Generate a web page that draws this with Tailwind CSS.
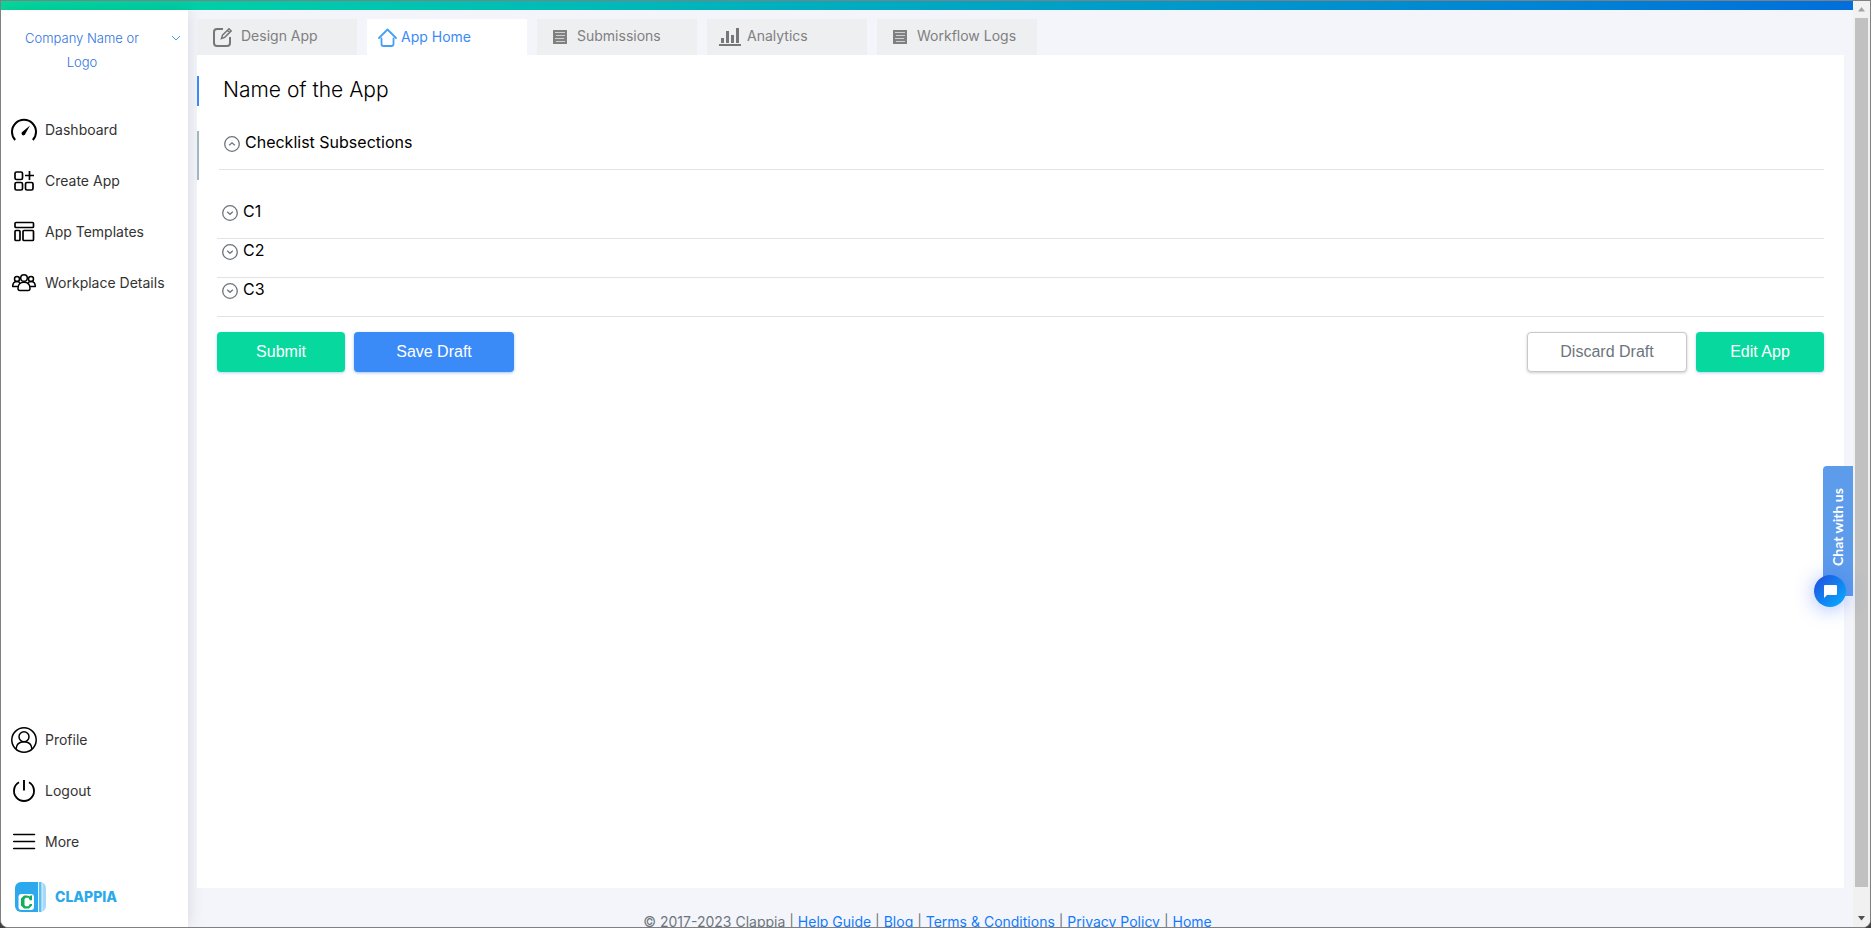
<!DOCTYPE html>
<html lang="en">
<head>
<meta charset="utf-8">
<meta name="viewport" content="width=device-width, initial-scale=1">
<title>Clappia - App Home</title>
<script src="https://cdn.jsdelivr.net/npm/@tailwindcss/browser@4"></script>
</head>
<body class="h-screen overflow-hidden bg-[#404040] font-['Inter',sans-serif]">
<div class="relative flex h-full overflow-hidden rounded-b-lg border border-[#808080] bg-[#f4f5fa]">
  <div class="flex min-w-0 flex-1 flex-col">
    <div class="h-[9px] shrink-0 bg-linear-to-r from-[#07d99e] to-[#026fdc]"></div>
    <div class="flex min-h-0 flex-1">

      <aside class="flex w-[187px] shrink-0 flex-col bg-white pt-4 shadow-[0_0_16px_rgba(0,0,0,0.12)]">
        <button class="mb-[30px] flex items-start text-[13px] leading-6 font-light text-[#2e73e0]">
          <span class="ml-5 w-[122px] text-center">Company Name or Logo</span>
          <svg class="mt-[9px] ml-[28px] h-[7px] w-[10px]" viewBox="0 0 10 7" fill="none" stroke="#4aa3f0" stroke-width="1"><path d="M1 1l4 4 4-4"/></svg>
        </button>
        <nav class="flex flex-1 flex-col text-sm text-[#333]">
          <a href="#" class="flex h-[51px] items-center gap-2 pl-[10px]">
            <svg class="size-[26px]" viewBox="0 0 26 26" fill="none" stroke="#000" stroke-width="2"><path d="M4.200 23A12 12 0 1 1 21.800 23"/><path d="M19 8.500L14.500 16.500A2 2 0 1 1 11.800 14.500z" fill="#000" stroke="none"/></svg>
            Dashboard</a>
          <a href="#" class="flex h-[51px] items-center gap-2 pl-[10px]">
            <svg class="size-[26px]" viewBox="0 0 26 26" fill="none" stroke="#000" stroke-width="1.700"><rect x="4" y="4" width="7.500" height="7.500" rx="1.500"/><rect x="4" y="14.500" width="7.500" height="7.500" rx="1.500"/><rect x="14.500" y="14.500" width="7.500" height="7.500" rx="1.500"/><path d="M18.500 3v9M14 7.500h9"/></svg>
            Create App</a>
          <a href="#" class="flex h-[51px] items-center gap-2 pl-[10px]">
            <svg class="size-[26px]" viewBox="0 0 26 26" fill="none" stroke="#000" stroke-width="1.700"><rect x="4" y="3.500" width="18.500" height="5" rx="1"/><rect x="4" y="11.500" width="5" height="10" rx="1"/><rect x="12" y="11.500" width="10.500" height="10" rx="1"/></svg>
            App Templates</a>
          <a href="#" class="flex h-[51px] items-center gap-2 pl-[10px]">
            <svg class="size-[26px]" viewBox="0 0 26 26" fill="none" stroke="#000" stroke-width="1.500" stroke-linejoin="round"><circle cx="13" cy="8" r="3.300"/><circle cx="6" cy="9" r="2.500"/><circle cx="20" cy="9" r="2.500"/><path d="M7 18.500c0-4 2.200-6.300 6-6.300s6 2.300 6 6.300c0 1.300-.8 2-2 2H9c-1.200 0-2-.7-2-2z"/><path d="M7.200 16.500H1.700c0-2.800 1-5 4.300-5 1.300 0 2.300.5 3 1.500M18.800 16.500h5.500c0-2.800-1-5-4.300-5-1.300 0-2.300.5-3 1.500"/></svg>
            Workplace Details</a>
          <a href="#" class="mt-auto flex h-[51px] items-center gap-2 pl-[10px]">
            <svg class="size-[26px]" viewBox="0 0 26 26" fill="none" stroke="#000" stroke-width="1.500"><circle cx="13" cy="13" r="12.200"/><circle cx="13" cy="9.800" r="5"/><path d="M5 22c.4-4.500 3.300-7.200 8-7.200s7.600 2.700 8 7.200"/></svg>
            Profile</a>
          <a href="#" class="flex h-[51px] items-center gap-2 pl-[10px]">
            <svg class="size-[26px]" viewBox="0 0 26 26" fill="none" stroke="#000" stroke-width="1.900"><path d="M13 2v10.500M8 4.300a10 10 0 1 0 10 0"/></svg>
            Logout</a>
          <a href="#" class="flex h-[51px] items-center gap-2 pl-[10px]">
            <svg class="size-[26px]" viewBox="0 0 26 26" fill="none" stroke="#000" stroke-width="1.500" stroke-linecap="round"><path d="M2.700 5.500h20.800M2.700 12.500h20.800M2.700 19.500h20.800"/></svg>
            More</a>
          <a href="#" class="flex h-[60px] items-center gap-[9px] pl-[14px] text-sm font-extrabold text-[#2ba9ec]">
            <svg class="h-[30px] w-[31px]" viewBox="0 0 31 30"><rect x="4" width="27" height="30" rx="6" fill="#a5d9f8"/><path d="M6 0h21v30H6z" fill="#5fbef2"/><path d="M23.500 0v30M27 0v30" stroke="#e5f5fe"/><path d="M6 0h17v30H6a6 6 0 0 1-6-6V6a6 6 0 0 1 6-6z" fill="#2ba9ec"/><rect x="3.500" y="12" width="15.500" height="16" rx="3" fill="#fff"/><path d="M17 18.300v-4.800h-1.800l-.5.900c-.8-.6-1.900-.9-3.200-.9H9l-3 3v7l3 3h5l3-3v-1.500h-2.200l-1.300 2.300h-2.800l-1.200-1.300v-6l1.200-1.300h2.800l1.300 2.600z" fill="#12ad5e"/></svg>
            CLAPPIA</a>
        </nav>
      </aside>

      <main class="flex min-w-0 flex-1 flex-col pt-[9px] pr-[9px] pl-[9px]">
        <nav class="flex shrink-0 gap-[10px] text-sm text-[#808080]">
          <a href="#" class="flex h-9 w-40 items-center gap-2 bg-[#eeeff1] pl-4">
            <svg class="size-5" viewBox="0 0 20 20" fill="none" stroke="#777" stroke-width="2"><path d="M10 2H4a3 3 0 0 0-3 3v11a3 3 0 0 0 3 3h10a3 3 0 0 0 3-3v-6" /><path d="M8.500 11.500l1-3.300 6.500-6.500 2.200 2.200-6.500 6.500zM14.500 3.500l2 2" stroke-width="1.500"/></svg>
            <span class="pb-[2px]">Design App</span></a>
          <a href="#" class="flex h-9 w-40 items-center gap-1 bg-white pl-[11px] text-[#3a8bf7]">
            <svg class="size-[19px]" viewBox="0 0 19 19" fill="none" stroke="#45a0f8" stroke-width="1.800" stroke-linejoin="round" stroke-linecap="round"><path d="M1 10l8.500-8.500L18 10M3.500 10.500V16a2 2 0 0 0 2 2h8a2 2 0 0 0 2-2v-5.500"/></svg>
            <span>App Home</span></a>
          <a href="#" class="flex h-9 w-40 items-center gap-[10px] bg-[#eeeff1] pl-4">
            <svg class="size-[14px]" viewBox="0 0 14 14"><path fill="#808080" d="M0 0h14v14H0z"/><path stroke="#d0d0d0" d="M2 2.500h10M3 5.500h9M2 8.500h9M3 11.500h9"/></svg>
            <span class="pb-[2px]">Submissions</span></a>
          <a href="#" class="flex h-9 w-40 items-center gap-[6px] bg-[#eeeff1] pl-3">
            <svg class="h-[18px] w-[22px]" viewBox="0 0 22 18" fill="#777"><path d="M2 10h3v5H2zM7 3h3v12H7zM12 7h3v8h-3zM17 0h3v15h-3zM0 16h22v2H0z"/></svg>
            <span class="pb-[2px]">Analytics</span></a>
          <a href="#" class="flex h-9 w-40 items-center gap-[10px] bg-[#eeeff1] pl-4">
            <svg class="size-[14px]" viewBox="0 0 14 14"><path fill="#808080" d="M0 0h14v14H0z"/><path stroke="#d0d0d0" d="M2 2.500h10M3 5.500h9M2 8.500h9M3 11.500h9"/></svg>
            <span class="pb-[2px]">Workflow Logs</span></a>
        </nav>

        <section class="min-h-0 flex-1 bg-white pt-[21px] text-black">
          <h1 class="h-[30px] border-l-2 border-[#3a8bf7] pl-6 text-[21px] leading-[28px] font-light">Name of the App</h1>
          <div class="mt-[25px] h-[49px] border-l-2 border-[#a3b5bd] pr-5 pl-5">
            <button class="flex h-[39px] w-full items-start gap-[5px] border-b border-[#e2e3e4] pl-[5px] text-base leading-[22px]">
              <svg class="mt-[5px] size-4" viewBox="0 0 16 16" fill="none" stroke="#6c757d" stroke-width="1.300"><circle cx="8" cy="8" r="7.300"/><path d="M5.200 9.300L8 6.800l2.800 2.500"/></svg>
              Checklist Subsections</button>
          </div>
          <div class="mt-5 px-5">
            <button class="flex h-[39px] w-full items-start gap-[5px] border-b border-[#e2e3e4] pl-[5px] text-base leading-[22px]">
              <svg class="mt-[5px] size-4" viewBox="0 0 16 16" fill="none" stroke="#6c757d" stroke-width="1.300"><circle cx="8" cy="8" r="7.300"/><path d="M5.200 6.800L8 9.300l2.800-2.500"/></svg>
              C1</button>
            <button class="flex h-[39px] w-full items-start gap-[5px] border-b border-[#e2e3e4] pl-[5px] text-base leading-[22px]">
              <svg class="mt-[5px] size-4" viewBox="0 0 16 16" fill="none" stroke="#6c757d" stroke-width="1.300"><circle cx="8" cy="8" r="7.300"/><path d="M5.200 6.800L8 9.300l2.800-2.500"/></svg>
              C2</button>
            <button class="flex h-[39px] w-full items-start gap-[5px] border-b border-[#e2e3e4] pl-[5px] text-base leading-[22px]">
              <svg class="mt-[5px] size-4" viewBox="0 0 16 16" fill="none" stroke="#6c757d" stroke-width="1.300"><circle cx="8" cy="8" r="7.300"/><path d="M5.200 6.800L8 9.300l2.800-2.500"/></svg>
              C3</button>
            <div class="mt-[15px] flex gap-[9px] font-['Liberation_Sans',sans-serif] text-base text-white">
              <button class="h-10 w-32 rounded bg-[#07d99e] shadow-[0_1px_3px_rgba(58,139,247,0.4)]">Submit</button>
              <button class="h-10 w-40 rounded bg-[#3a8bf7] shadow-[0_1px_3px_rgba(58,139,247,0.5)]">Save Draft</button>
              <button class="ml-auto h-10 w-40 rounded border border-[#c8c8c8] bg-white text-[#6c757d] shadow-[0_1px_3px_rgba(0,0,0,0.2)]">Discard Draft</button>
              <button class="h-10 w-32 rounded bg-[#07d99e] shadow-[0_1px_3px_rgba(58,139,247,0.4)]">Edit App</button>
            </div>
          </div>
        </section>

        <footer class="h-[39px] shrink-0 overflow-hidden pt-[22px] pr-[186px] text-center text-sm leading-6 whitespace-nowrap text-[#6c757d]">
          © 2017-2023 Clappia | <a href="#" class="text-[#107bff]">Help Guide</a> | <a href="#" class="text-[#107bff]">Blog</a> | <a href="#" class="text-[#107bff]">Terms &amp; Conditions</a> | <a href="#" class="text-[#107bff]">Privacy Policy</a> | <a href="#" class="text-[#107bff]">Home</a>
        </footer>
      </main>
    </div>
  </div>

  <div class="flex w-[17px] shrink-0 flex-col items-center bg-[#f1f1f1]">
    <svg class="mt-[6px] mb-[6px] h-[5px] w-[7px] shrink-0" viewBox="0 0 7 5" fill="#a3a3a3"><path d="M0 4.500L3.500 0 7 4.500z"/></svg>
    <div class="w-[13px] flex-1 bg-[#c1c1c1]"></div>
    <svg class="mt-[29px] mb-[6px] h-[5px] w-[7px] shrink-0" viewBox="0 0 7 5" fill="#505050"><path d="M0 0h7L3.500 4.500z"/></svg>
  </div>

  <!-- Chat launcher floating over the page edge -->
  <button class="absolute top-[465px] right-[17px] flex h-[130px] w-[30px] rotate-180 items-center justify-center rounded-r bg-[#5d9beb] pt-2 font-['Lato',sans-serif] text-sm font-bold text-white [writing-mode:vertical-rl]">Chat with us</button>
  <button aria-label="Open chat" class="absolute top-[574px] right-[24px] flex size-8 items-center justify-center rounded-full bg-linear-to-br from-[#2348dd] to-[#05b0ff] shadow-[0_2px_20px_rgba(30,90,255,0.4)]">
    <svg class="size-[13px]" viewBox="0 0 13 13" fill="#fff"><path d="M1 0h11a1 1 0 0 1 1 1v8a1 1 0 0 1-1 1H3l-3 3V1a1 1 0 0 1 1-1z"/></svg>
  </button>
</div>
</body>
</html>
